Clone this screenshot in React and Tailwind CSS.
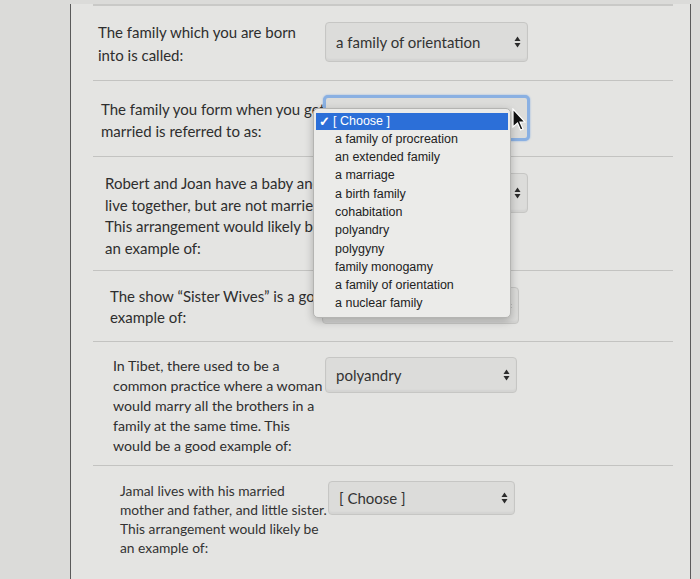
import React from 'react';

const options = [
  'a family of procreation',
  'an extended family',
  'a marriage',
  'a birth family',
  'cohabitation',
  'polyandry',
  'polygyny',
  'family monogamy',
  'a family of orientation',
  'a nuclear family',
];

const Arrows = () => (
  <svg width="7" height="12" viewBox="0 0 7 12" className="shrink-0">
    <path d="M3.5 0.5 L6.5 5 L0.5 5 Z" fill="#2b2b2b" />
    <path d="M3.5 11.5 L6.5 7 L0.5 7 Z" fill="#2b2b2b" />
  </svg>
);

const Select = ({ value, className = '' }) => (
  <div
    className={`flex items-center justify-between rounded-[4px] border border-[#c6c6c4] bg-[#dcdcda] pl-[10px] pr-[6px] text-[15px] text-[#333] shadow-[inset_0_-2px_2px_rgba(0,0,0,0.04)] ${className}`}
  >
    <span>{value}</span>
    <Arrows />
  </div>
);

const Row = ({ lines, col, pt, lh, h, size = 'text-[15px]', children }) => (
  <div className={`flex border-b border-[#c3c3c1] ${h}`}>
    <div className={`${col} ${pt} ${lh} ${size} shrink-0 whitespace-nowrap text-[#2e2e2e]`}>
      {lines.map((l, i) => (
        <div key={i}>{l}</div>
      ))}
    </div>
    {children}
  </div>
);

const Cursor = () => (
  <svg width="14" height="24" viewBox="0 0 14 24" className="absolute left-[512px] top-[108px]">
    <path d="M1 1 L1 19 L5.5 15 L8.5 22 L11 21 L8 14 L13 14 Z" fill="#111" stroke="#fff" strokeWidth="1.2" />
  </svg>
);

const App = () => {
  return (
    <div className="relative h-[579px] w-[700px] overflow-hidden bg-[#dbdbd9]" style={{ fontFamily: 'Lato, "Open Sans", sans-serif' }}>
      <div className="ml-[70px] h-full w-[621px] border-l border-r border-[#5a5a5a] bg-[#e4e4e2] pl-[22px] pr-[17px]">
        <div className="mt-[4px] border-t-2 border-[#c9c9c7]">
          <Row lines={['The family which you are born', 'into is called:']} col="w-[232px] pl-[5px]" pt="pt-[15px]" lh="leading-[23px]" h="h-[75px]">
            <Select value="a family of orientation" className="mt-[16px] h-[40px] w-[203px]" />
          </Row>
          <Row lines={['The family you form when you get', 'married is referred to as:']} col="w-[220px] pl-[8px]" pt="pt-[17px]" lh="leading-[22px]" h="h-[76px]">
            <div className="ml-[10px] mt-[14px] h-[46px] w-[207px] rounded-[5px] border-[3px] border-[#8ab0e2] bg-[#dcdcda] shadow-[0_0_2px_#8ab0e2]" />
          </Row>
          <Row
            lines={['Robert and Joan have a baby and', 'live together, but are not married.', 'This arrangement would likely be', 'an example of:']}
            col="w-[220px] pl-[12px]"
            pt="pt-[16px]"
            lh="leading-[21.7px]"
            h="h-[114px]"
          >
            <Select value="" className="ml-[11px] mt-[16px] h-[40px] w-[204px]" />
          </Row>
          <Row lines={['The show \u201cSister Wives\u201d is a good', 'example of:']} col="w-[220px] pl-[17px]" pt="pt-[15px]" lh="leading-[21px]" h="h-[71px]">
            <Select value="" className="ml-[9px] mt-[16px] h-[37px] w-[197px]" />
          </Row>
          <Row
            lines={['In Tibet, there used to be a', 'common practice where a woman', 'would marry all the brothers in a', 'family at the same time. This', 'would be a good example of:']}
            col="w-[232px] pl-[20px]"
            pt="pt-[14px]"
            lh="leading-[20px]"
            h="h-[124px]"
            size="text-[14.2px]"
          >
            <Select value="polyandry" className="mt-[15px] h-[36px] w-[192px]" />
          </Row>
          <div className="flex">
            <div className="w-[235px] shrink-0 whitespace-nowrap pl-[27px] pt-[15px] text-[13.8px] leading-[19px] text-[#333]">
              <div>Jamal lives with his married</div>
              <div>mother and father, and little sister.</div>
              <div>This arrangement would likely be</div>
              <div>an example of:</div>
            </div>
            <Select value="[ Choose ]" className="mt-[15px] h-[34px] w-[187px]" />
          </div>
        </div>
      </div>

      <div
        className="absolute left-[313px] top-[108px] w-[198px] rounded-[5px] border border-[#b4b4b2] bg-[#ebebe9] pb-[4px] pt-[4px] shadow-[0_3px_8px_rgba(0,0,0,0.25)]"
        style={{ fontFamily: '"Liberation Sans", Arial, sans-serif' }}
      >
        <div className="mx-[2px] flex h-[17px] items-center bg-[#2c6fd8] pl-[3px] text-[12.5px] text-white">
          <span className="mr-[3px] text-[13px] font-bold">{'\u2713'}</span>
          <span>[ Choose ]</span>
        </div>
        {options.map((o) => (
          <div key={o} className="flex h-[18.3px] items-center pl-[21px] text-[12.5px] text-[#222]">
            {o}
          </div>
        ))}
      </div>
      <Cursor />
    </div>
  );
};

export default App;
